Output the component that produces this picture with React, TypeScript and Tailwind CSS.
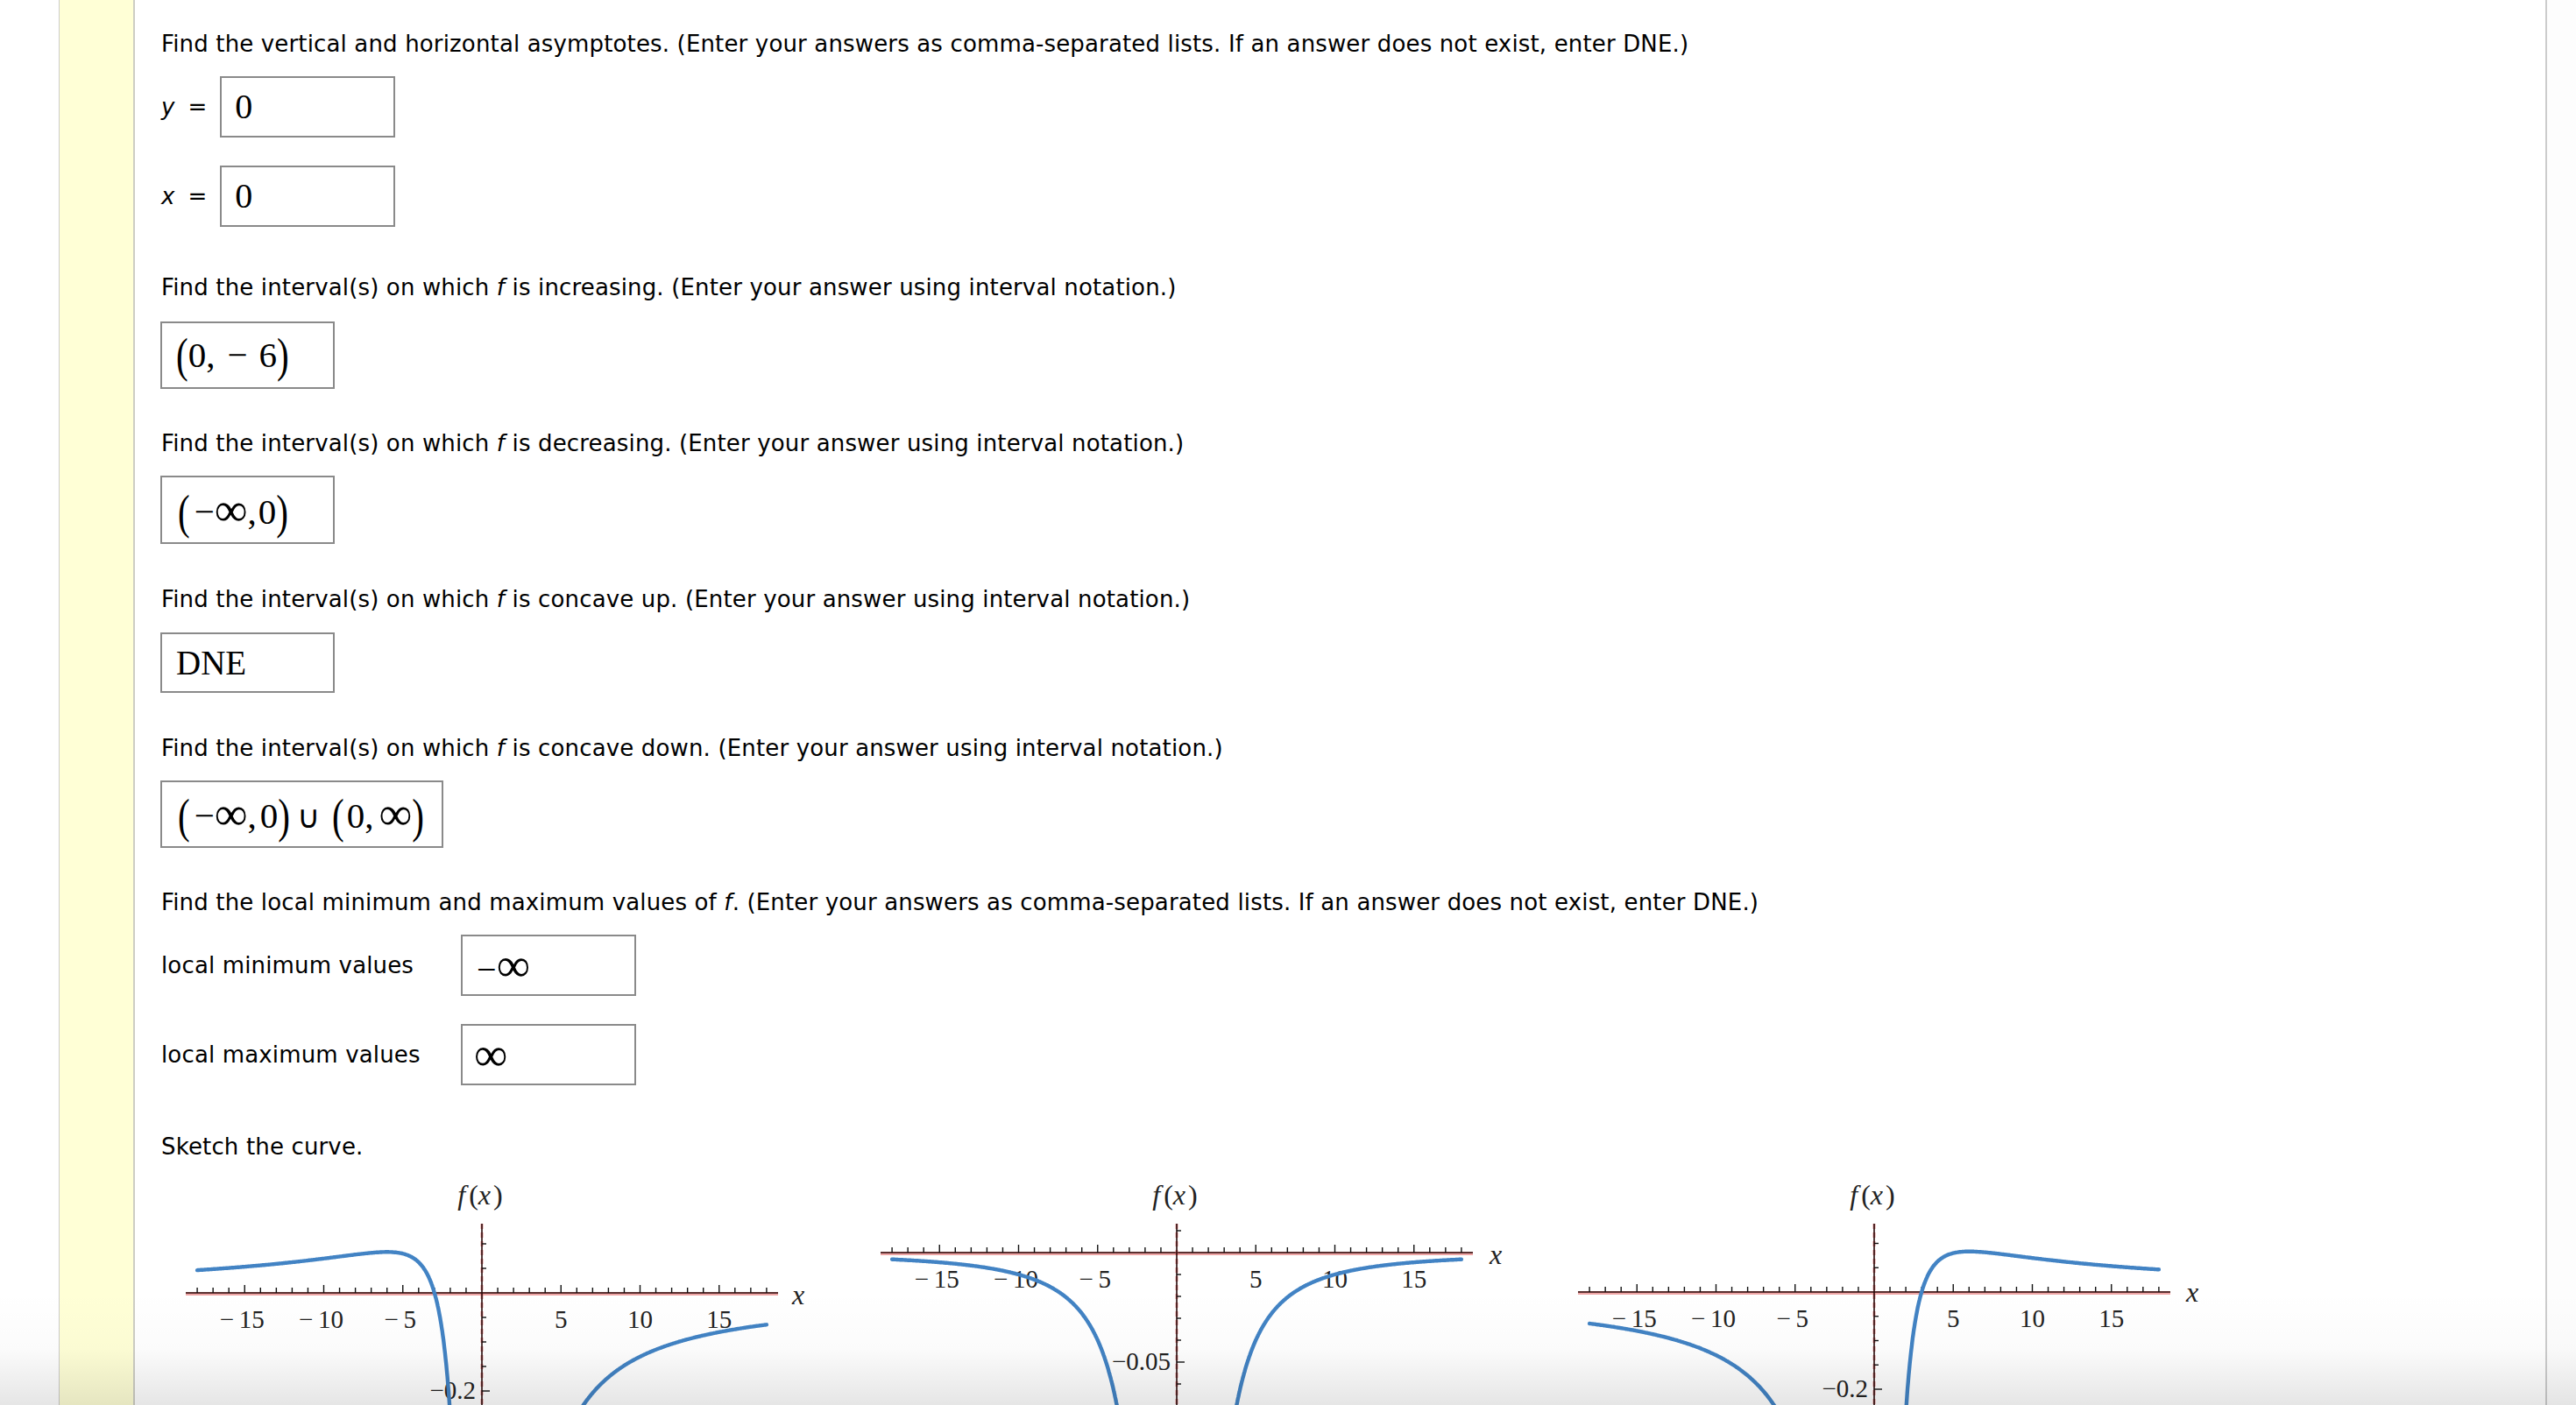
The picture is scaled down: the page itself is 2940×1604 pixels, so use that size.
import React from 'react';

const serif = "font-['Liberation_Serif','Times_New_Roman',serif]";

// tall bracket like the typeset answers
const Paren = ({ c }: { c: string }) => (
    <span className="inline-block scale-y-[1.35]">{c}</span>
);

const Inf = () => <span className="text-[53px] align-[-2px]">∞</span>;

const Line = ({ children, className = '' }: { children: React.ReactNode; className?: string }) => (
    <p className={`h-[36px] leading-[36px] text-[26px] tracking-[0.15px] whitespace-nowrap ${className}`}>{children}</p>
);

const AnswerBox = ({ children, className = '' }: { children: React.ReactNode; className?: string }) => (
    <div className={`flex shrink-0 items-center border-2 border-[#8a8a8a] bg-white ${className}`}>
        <span className="leading-none whitespace-nowrap">{children}</span>
    </div>
);

type GraphProps = {
    ox: number;
    oy: number;
    sy: number;
    f: (x: number) => number;
    yStep: number;
    yLabel: string;
    yLabelValue: number;
    xLabelAt: [number, number];
    className?: string;
};

const SX = 18.05;

function branch(f: (x: number) => number, a: number, b: number, ox: number, oy: number, sy: number) {
    const pts: string[] = [];
    const n = 500;
    for (let i = 0; i <= n; i++) {
        const x = a + ((b - a) * i) / n;
        let y = oy - f(x) * sy;
        y = Math.max(-200, Math.min(700, y));
        pts.push(`${(ox + x * SX).toFixed(1)},${y.toFixed(1)}`);
    }
    return 'M' + pts.join('L');
}

const Graph = ({ ox, oy, sy, f, yStep, yLabel, yLabelValue, xLabelAt, className = '' }: GraphProps) => {
    const xTicks = Array.from({ length: 37 }, (_, i) => i - 18);
    const yTicks: number[] = [];
    for (let k = -12; k <= 12; k++) {
        const py = oy - k * yStep * sy;
        if (k !== 0 && py > 57 && py < 300) yTicks.push(py);
    }
    const labelY = oy - yLabelValue * sy;
    return (
        <svg width={740} height={270} className={`shrink-0 ${className}`}>
            {/* axes */}
            <line x1={ox - 338} y1={oy + 1} x2={ox + 338} y2={oy + 1} stroke="#e05a5a" strokeOpacity={0.55} strokeWidth={4} />
            <line x1={ox - 338} y1={oy} x2={ox + 338} y2={oy} stroke="#2a0a0a" strokeWidth={1.6} />
            <line x1={ox} y1={57} x2={ox} y2={300} stroke="#e05a5a" strokeOpacity={0.6} strokeWidth={3} strokeDasharray="6 4" />
            <line x1={ox} y1={57} x2={ox} y2={300} stroke="#2a0a0a" strokeWidth={1.6} />
            {xTicks.map((t) =>
                t === 0 ? null : (
                    <line key={t} x1={ox + t * SX} y1={oy} x2={ox + t * SX} y2={oy - (t % 5 === 0 ? 9 : 6)} stroke="#111" strokeWidth={1.4} />
                )
            )}
            {yTicks.map((py) => (
                <line key={py} x1={ox} y1={py} x2={ox + (Math.abs(py - labelY) < 1 ? 9 : 5)} y2={py} stroke="#111" strokeWidth={1.4} />
            ))}
            {/* labels */}
            <text x={ox - 2} y={35} textAnchor="middle" fontFamily="'Liberation Serif', serif" fontSize={32} fill="#222">
                <tspan fontStyle="italic">f</tspan>
                <tspan dx={4}>(</tspan>
                <tspan fontStyle="italic">x</tspan>
                <tspan dx={3}>)</tspan>
            </text>
            <text x={xLabelAt[0]} y={xLabelAt[1]} textAnchor="middle" fontFamily="'Liberation Serif', serif" fontStyle="italic" fontSize={32} fill="#222">
                x
            </text>
            {[-15, -10, -5, 5, 10, 15].map((t) => (
                <text key={t} x={ox + t * SX - (t < 0 ? 3 : 0)} y={oy + 40} textAnchor="middle" fontFamily="'Liberation Serif', serif" fontSize={29} fill="#222">
                    {t < 0 ? `−\u2009${-t}` : t}
                </text>
            ))}
            <text x={ox - 7} y={labelY + 9} textAnchor="end" fontFamily="'Liberation Serif', serif" fontSize={29} fill="#222">
                {yLabel}
            </text>
            {/* curve */}
            <path d={branch(f, -18, -0.15, ox, oy, sy)} fill="none" stroke="#4283c4" strokeWidth={4.4} strokeLinecap="round" />
            <path d={branch(f, 0.15, 18, ox, oy, sy)} fill="none" stroke="#4283c4" strokeWidth={4.4} strokeLinecap="round" />
        </svg>
    );
};

export default function App() {
    return (
        <div className="relative flex h-[1604px] w-[2940px] overflow-hidden bg-white font-['DejaVu_Sans',Verdana,sans-serif] text-black">
            <div className="w-[67px] shrink-0" />
            <div className="w-[87px] shrink-0 border-l border-r-2 border-l-[#cccccc] border-r-[#cdcdc4] bg-[#ffffd6]" />

            <main className="flex w-[2753px] shrink-0 flex-col items-start border-r-2 border-[#cccccc] pl-[30px] pt-[32px] *:shrink-0">
                <Line>
                    Find the vertical and horizontal asymptotes. (Enter your answers as comma-separated lists. If an answer does not exist, enter DNE.)
                </Line>

                <div className="mt-[19px] flex h-[70px] items-center text-[26px]">
                    <span className="italic">y</span>
                    <span className="ml-[15px]">=</span>
                    <AnswerBox className={`ml-[15px] h-[70px] w-[200px] pl-[15px] text-[40px] ${serif}`}>0</AnswerBox>
                </div>
                <div className="mt-[32px] flex h-[70px] items-center text-[26px]">
                    <span className="italic">x</span>
                    <span className="ml-[15px]">=</span>
                    <AnswerBox className={`ml-[15px] h-[70px] w-[200px] pl-[15px] text-[40px] ${serif}`}>0</AnswerBox>
                </div>

                <Line className="mt-[51px]">
                    Find the interval(s) on which <i>f</i> is increasing. (Enter your answer using interval notation.)
                </Line>
                <AnswerBox className={`mt-[21px] -ml-px h-[77px] w-[199px] pl-[16px] text-[41px] ${serif}`}>
                    <Paren c="(" />0,<span className="ml-[14px]">−</span>
                    <span className="ml-[13px]">6</span>
                    <Paren c=")" />
                </AnswerBox>

                <Line className="mt-[44px]">
                    Find the interval(s) on which <i>f</i> is decreasing. (Enter your answer using interval notation.)
                </Line>
                <AnswerBox className={`mt-[19px] -ml-px h-[78px] w-[199px] pl-[18px] text-[41px] ${serif}`}>
                    <Paren c="(" />
                    <span className="ml-[5px]">−</span>
                    <Inf />,<span className="ml-[2px]">0</span>
                    <Paren c=")" />
                </AnswerBox>

                <Line className="mt-[45px]">
                    Find the interval(s) on which <i>f</i> is concave up. (Enter your answer using interval notation.)
                </Line>
                <AnswerBox className={`mt-[20px] -ml-px h-[69px] w-[199px] pl-[16px] text-[39px] ${serif}`}>DNE</AnswerBox>

                <Line className="mt-[45px]">
                    Find the interval(s) on which <i>f</i> is concave down. (Enter your answer using interval notation.)
                </Line>
                <AnswerBox className={`mt-[19px] -ml-px h-[77px] w-[323px] pl-[18px] text-[41px] ${serif}`}>
                    <Paren c="(" />
                    <span className="ml-[5px]">−</span>
                    <Inf />,<span className="ml-[4px]">0</span>
                    <Paren c=")" />
                    <span className="ml-[8px] mr-[14px] text-[36px]">∪</span>
                    <Paren c="(" />
                    <span className="ml-[3px]">0</span>,<span className="ml-[6px]"><Inf /></span>
                    <Paren c=")" />
                </AnswerBox>

                <Line className="mt-[44px]">
                    Find the local minimum and maximum values of <i>f</i>. (Enter your answers as comma-separated lists. If an answer does not exist, enter DNE.)
                </Line>
                <div className="mt-[19px] flex h-[70px] items-center text-[26px] tracking-[0.15px]">
                    <span className="w-[342px]">local minimum values</span>
                    <AnswerBox className={`h-[70px] w-[200px] pl-[16px] ${serif}`}>
                        <span className="text-[40px]">−</span>
                        <span className="text-[54px]">∞</span>
                    </AnswerBox>
                </div>
                <div className="mt-[32px] flex h-[70px] items-center text-[26px] tracking-[0.15px]">
                    <span className="w-[342px]">local maximum values</span>
                    <AnswerBox className={`h-[70px] w-[200px] pl-[13px] ${serif}`}>
                        <span className="text-[54px]">∞</span>
                    </AnswerBox>
                </div>

                <Line className="mt-[52px]">Sketch the curve.</Line>

                <div className="mt-[13px] flex">
                    <Graph className="ml-[16px]" ox={350} oy={136} sy={560} f={(x) => -(x + 3) / (x * x)} yStep={0.05} yLabel="−0.2" yLabelValue={-0.2} xLabelAt={[711, 149]} />
                    <Graph className="ml-[50px]" ox={353} oy={90} sy={2500} f={(x) => -1 / (x * x)} yStep={0.01} yLabel="−0.05" yLabelValue={-0.05} xLabelAt={[717, 103]} />
                    <Graph className="ml-[60px]" ox={349} oy={135} sy={555} f={(x) => (x - 3) / (x * x)} yStep={0.05} yLabel="−0.2" yLabelValue={-0.2} xLabelAt={[712, 146]} />
                </div>
            </main>

            <div className="flex-1 bg-[#fdfdfd]" />

            {/* soft shade along the bottom edge */}
            <div className="pointer-events-none absolute inset-x-0 bottom-0 h-[130px] bg-linear-to-b from-transparent via-black/[0.015] to-black/[0.1]" />
        </div>
    );
}
